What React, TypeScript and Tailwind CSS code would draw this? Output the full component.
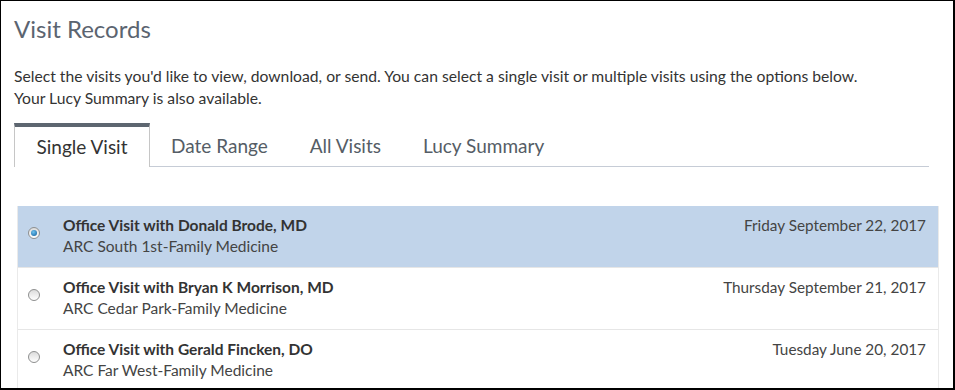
const visits = [
  {
    title: "Office Visit with Donald Brode, MD",
    place: "ARC South 1st-Family Medicine",
    date: "Friday September 22, 2017",
    selected: true,
  },
  {
    title: "Office Visit with Bryan K Morrison, MD",
    place: "ARC Cedar Park-Family Medicine",
    date: "Thursday September 21, 2017",
    selected: false,
  },
  {
    title: "Office Visit with Gerald Fincken, DO",
    place: "ARC Far West-Family Medicine",
    date: "Tuesday June 20, 2017",
    selected: false,
  },
];

const tabs = ["Single Visit", "Date Range", "All Visits", "Lucy Summary"];

function Radio({ checked }: { checked: boolean }) {
  return (
    <span className="flex items-center justify-center w-[12px] h-[12px] rounded-full border border-[#8e8f8f] bg-gradient-to-b from-[#dcdcdc] to-[#ffffff]">
      {checked && (
        <span className="w-[6px] h-[6px] rounded-full bg-[radial-gradient(circle_at_40%_35%,#6fc3f0,#0d5b99)]" />
      )}
    </span>
  );
}

export default function App() {
  return (
    <main
      className="w-[955px] h-[390px] overflow-hidden border-t border-l border-r-2 border-b-2 border-black bg-white text-[#333]"
      style={{ fontFamily: "Lato, 'Liberation Sans', sans-serif" }}
    >
      <div className="pl-[13px] pr-[24px] pt-[12px]">
        <h1 className="text-[24px] leading-[32px] text-[#5b6470] font-normal">Visit Records</h1>
        <p className="mt-[20px] text-[15.7px] leading-[22px] text-[#333]">
          Select the visits you'd like to view, download, or send. You can select a single visit or multiple visits using the options below.
          <br />
          Your Lucy Summary is also available.
        </p>
        <div className="mt-[14px] flex border-b border-[#c6ccd6] h-[44px]">
          {tabs.map((t, i) =>
            i === 0 ? (
              <div
                key={t}
                className="w-[136px] -mb-px flex items-center justify-center border-t-4 border-t-[#5d6670] border-x border-x-[#c6c6c6] bg-white text-[19px] text-[#333]"
              >
                {t}
              </div>
            ) : (
              <div key={t} className="flex items-center px-[21px] first:pl-[23px] pt-[4px] text-[19px] text-[#555d66]">
                {t}
              </div>
            )
          )}
        </div>
      </div>
      <div className="mt-[39px] ml-[16px] mr-[14px] border-x border-[#eaeaea]">
        {visits.map((v) => (
          <div
            key={v.title}
            className={`flex h-[62px] border-b border-[#e6e6e6] ${v.selected ? "bg-[#c1d4ea]" : "bg-white"}`}
          >
            <div className="w-[45px] pt-[21px] pl-[10px]">
              <Radio checked={v.selected} />
            </div>
            <div className="flex-1 pt-[9px] text-[15.5px] leading-[21px]">
              <div className="font-bold text-[#333]">{v.title}</div>
              <div className="text-[#444]">{v.place}</div>
            </div>
            <div className="pt-[9px] pr-[12px] text-[15.3px] leading-[21px] text-[#444]">{v.date}</div>
          </div>
        ))}
      </div>
    </main>
  );
}
